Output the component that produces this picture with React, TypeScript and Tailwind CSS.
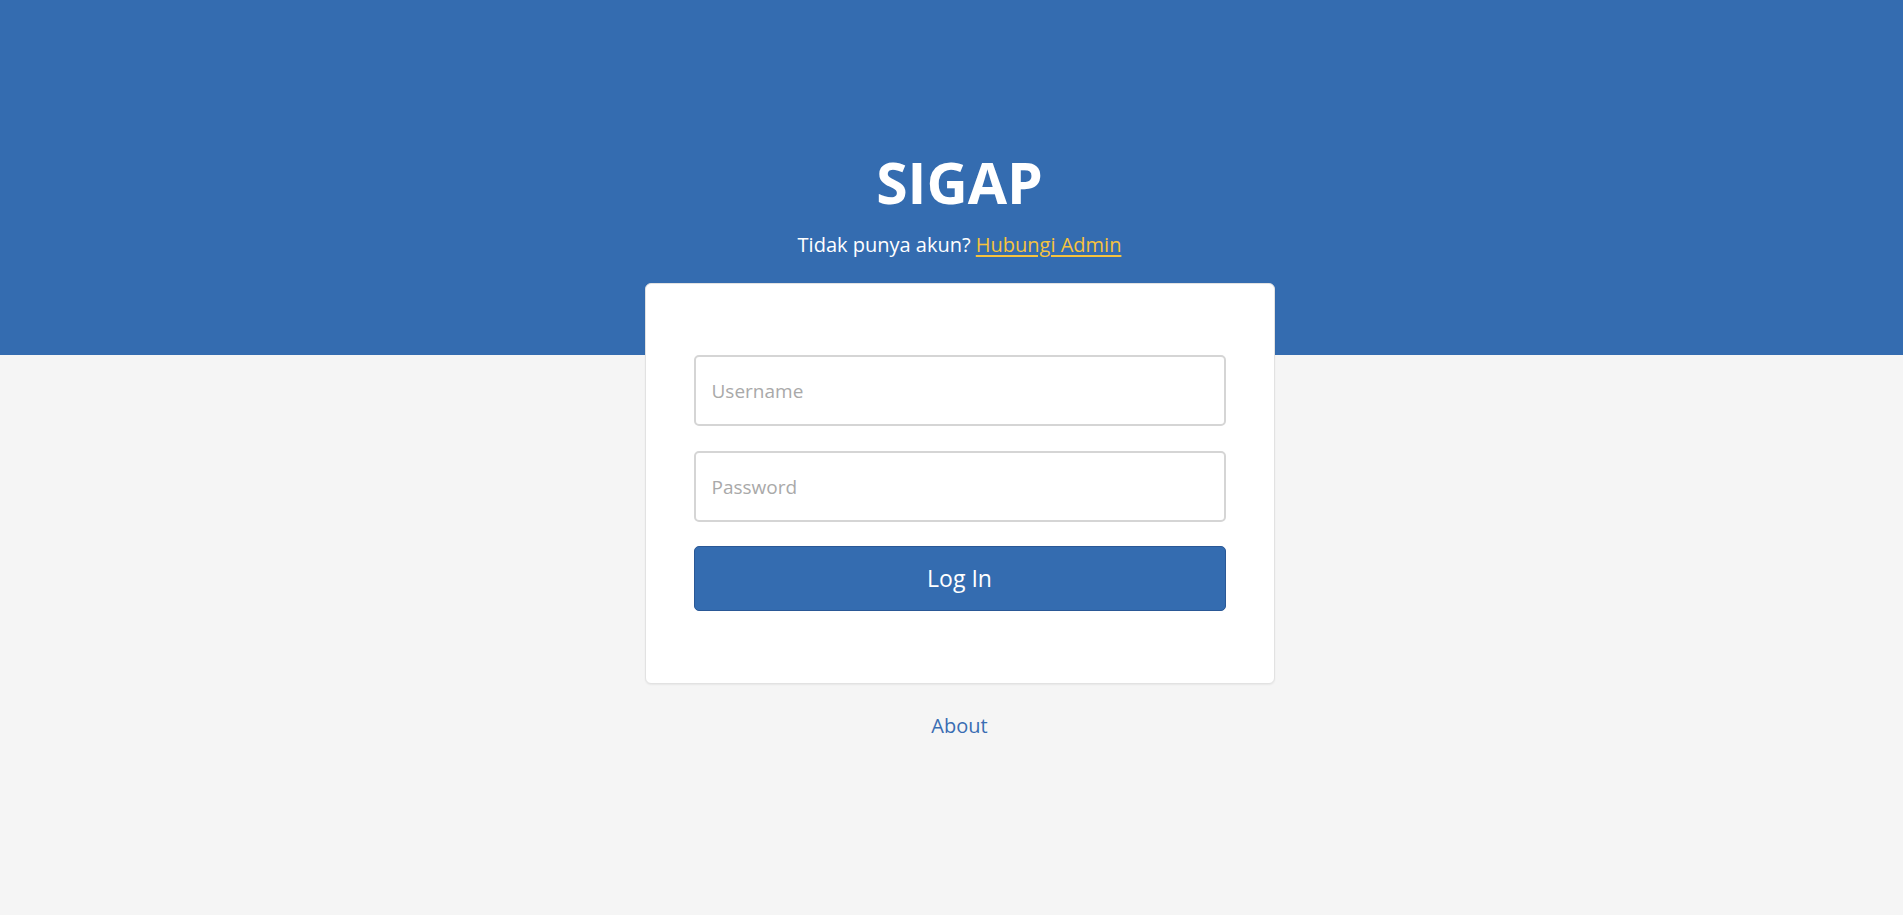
import React, { useState } from 'react';

const font = { fontFamily: '"Open Sans", "Noto Sans", "Liberation Sans", sans-serif' };

export default function App() {
  const [username, setUsername] = useState('');
  const [password, setPassword] = useState('');

  return (
    <div className="min-h-screen bg-[#f5f5f5]" style={font}>
      {/* header biru */}
      <div className="h-[355px] bg-[#346cb0] pl-4 flex flex-col items-center pt-[154px]">
        <h1 className="text-[57px] leading-none font-bold text-white">SIGAP</h1>
        <p className="mt-[19px] text-[20px] leading-[1.5] text-white">
          Tidak punya akun?{' '}
          <a href="#" className="text-[#f7c33d] underline underline-offset-[3px]">
            Hubungi Admin
          </a>
        </p>
      </div>

      <div className="pl-4 flex flex-col items-center -mt-[72px]">
        <form
          onSubmit={(e) => e.preventDefault()}
          className="w-[630px] bg-white rounded-[6px] border border-[#e2e2e2] shadow-[0_1px_2px_rgba(0,0,0,0.06)] px-[48px] pt-[71px] pb-[72px] flex flex-col"
        >
          <input
            type="text"
            value={username}
            onChange={(e) => setUsername(e.target.value)}
            placeholder="Username"
            className="h-[71px] w-full rounded-[5px] border-2 border-[#d5d5d5] bg-white px-[16px] text-[19px] text-gray-700 placeholder:text-[#a9a9a9] outline-none"
          />
          <input
            type="password"
            value={password}
            onChange={(e) => setPassword(e.target.value)}
            placeholder="Password"
            className="mt-[25px] h-[71px] w-full rounded-[5px] border-2 border-[#d5d5d5] bg-white px-[16px] text-[19px] text-gray-700 placeholder:text-[#a9a9a9] outline-none"
          />
          <button
            type="submit"
            className="mt-[24px] h-[65px] w-full rounded-[5px] border border-[#2a5896] bg-[#346cb0] text-[23px] text-white"
          >
            Log In
          </button>
        </form>

        <a href="#" className="mt-[27px] text-[20px] leading-[1.5] text-[#3a6db3]">
          About
        </a>
      </div>
    </div>
  );
}
